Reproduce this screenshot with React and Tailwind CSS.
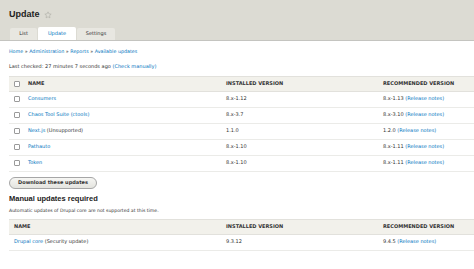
const rows = [
  { name: "Consumers", installed: "8.x-1.12", rec: "8.x-1.13" },
  { name: "Chaos Tool Suite (ctools)", installed: "8.x-3.7", rec: "8.x-3.10" },
  { name: "Next.js", note: "(Unsupported)", installed: "1.1.0", rec: "1.2.0" },
  { name: "Pathauto", installed: "8.x-1.10", rec: "8.x-1.11" },
  { name: "Token", installed: "8.x-1.10", rec: "8.x-1.11" },
];

const Box = () => (
  <span className="inline-block w-[6px] h-[6px] border border-[#9a9a9a] bg-white rounded-[1px]"></span>
);

const App = () => {
  return (
    <div className="w-[474px] h-[269px] overflow-hidden bg-white font-['DejaVu_Sans',sans-serif] text-[#333] text-[5px]">
      {/* HEADER */}
      <div className="bg-[#dcdbd3] border-b border-[#c4c4c0] h-[41px] px-[9px] pt-[8px]">
        <div className="flex items-center gap-[4px] h-[13px]">
          <h1 className="text-[9px] font-bold text-[#222] font-['Liberation_Sans',sans-serif]">Update</h1>
          <svg width="8" height="8" viewBox="0 0 24 24" className="mt-[1px]">
            <path d="M12 2.5l2.9 6.1 6.6.8-4.9 4.6 1.3 6.6L12 17.3l-5.9 3.3 1.3-6.6-4.9-4.6 6.6-.8z" fill="none" stroke="#a8a8a0" strokeWidth="1.6" strokeLinejoin="round" />
          </svg>
        </div>
        <div className="flex mt-[6px] pl-[1px] gap-[1px] h-[13px] items-end">
          <div className="w-[27px] h-[12px] bg-[#e8e7e1] rounded-t-[2px] flex items-center justify-center">List</div>
          <div className="w-[38px] h-[13px] bg-white rounded-t-[2px] flex items-center justify-center text-[#0074bd]">Update</div>
          <div className="w-[38px] h-[12px] bg-[#e8e7e1] rounded-t-[2px] flex items-center justify-center">Settings</div>
        </div>
      </div>

      <div className="px-[9px]">
        {/* BREADCRUMB */}
        <div className="mt-[7px] text-[#0074bd] text-[4.8px]">
          Home <span className="text-[#333]">»</span> Administration <span className="text-[#333]">»</span> Reports <span className="text-[#333]">»</span> Available updates
        </div>

        <div className="mt-[8px]">
          Last checked: 27 minutes 7 seconds ago <span className="text-[#0074bd]">(Check manually)</span>
        </div>

        {/* TABLE 1 */}
        <div className="mt-[5px] w-[470px]">
          <div className="flex items-center h-[16px] bg-[#f2f1eb] border-y border-[#e2e1dc] font-bold">
            <div className="w-[19px] pl-[5px] flex"><Box /></div>
            <div className="w-[198px]">NAME</div>
            <div className="w-[157px]">INSTALLED VERSION</div>
            <div>RECOMMENDED VERSION</div>
          </div>
          {rows.map((r) => (
            <div key={r.name} className="flex items-center h-[16px] border-b border-[#ebebe8]">
              <div className="w-[19px] pl-[5px] flex"><Box /></div>
              <div className="w-[198px] text-[#0074bd]">
                {r.name} {r.note && <span className="text-[#333]">{r.note}</span>}
              </div>
              <div className="w-[157px]">{r.installed}</div>
              <div>
                {r.rec} <span className="text-[#0074bd]">(Release notes)</span>
              </div>
            </div>
          ))}
        </div>

        <button className="mt-[5px] h-[12px] w-[88px] rounded-full border border-[#a6a6a6] bg-gradient-to-b from-[#f6f6f3] to-[#e4e4df] font-bold text-[#333] text-[5px] flex items-center justify-center">
          Download these updates
        </button>

        <h2 className="mt-[5px] text-[7.5px] leading-[9px] font-bold text-[#222] font-['Liberation_Sans',sans-serif]">Manual updates required</h2>

        <div className="mt-[5px] text-[4.6px]">Automatic updates of Drupal core are not supported at this time.</div>

        {/* TABLE 2 */}
        <div className="mt-[4px] w-[470px]">
          <div className="flex items-center h-[16px] bg-[#f2f1eb] border-y border-[#e2e1dc] font-bold">
            <div className="w-[217px] pl-[5px]">NAME</div>
            <div className="w-[157px]">INSTALLED VERSION</div>
            <div>RECOMMENDED VERSION</div>
          </div>
          <div className="flex items-center h-[16px] border-b border-[#ebebe8]">
            <div className="w-[217px] pl-[5px] text-[#0074bd]">
              Drupal core <span className="text-[#333]">(Security update)</span>
            </div>
            <div className="w-[157px]">9.3.12</div>
            <div>
              9.4.5 <span className="text-[#0074bd]">(Release notes)</span>
            </div>
          </div>
        </div>
      </div>
    </div>
  );
};

export default App;
